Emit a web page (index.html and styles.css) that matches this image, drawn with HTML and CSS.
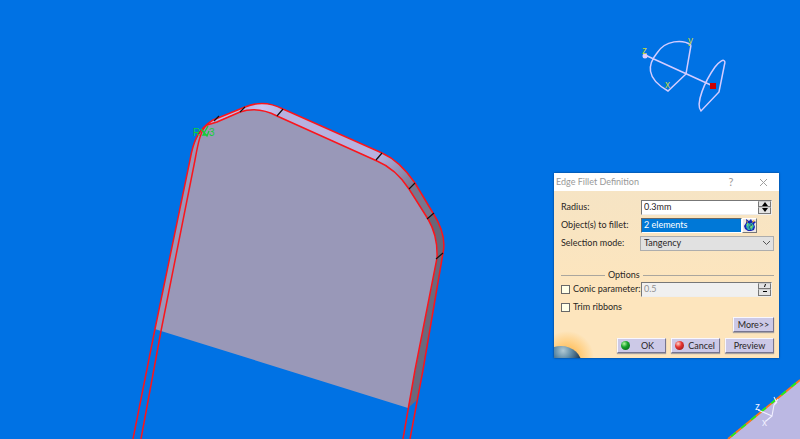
FILE: index.html
```html
<!DOCTYPE html>
<html lang="en">
<head>
<meta charset="utf-8">
<title>Edge Fillet Definition</title>
<link rel="stylesheet" href="styles.css">
</head>
<body>
<main class="viewport">
  <svg class="scene" viewBox="0 0 800 439" preserveAspectRatio="xMidYMid slice" aria-hidden="true">
    <defs>
      <linearGradient id="bend" gradientUnits="userSpaceOnUse" x1="378" y1="152" x2="414" y2="187">
        <stop offset="0" stop-color="#b8b4e4"/><stop offset="1" stop-color="#77768f"/>
      </linearGradient>
      <linearGradient id="crest" gradientUnits="userSpaceOnUse" x1="243" y1="0" x2="281" y2="0">
        <stop offset="0" stop-color="#b4b0e0"/><stop offset=".5" stop-color="#c9c4f2"/><stop offset="1" stop-color="#b8b4e2"/>
      </linearGradient>
    </defs>
    <!-- part: side walls, then front face -->
    <path fill="#9a97b8" d="M155 329L190 160Q194 136 208 123L217 122L200 145L161 331Z"/>
    <path fill="#c3b9e6" d="M207 124L217 118L245 107L240 112L217 122Z"/>
    <path fill="url(#crest)" d="M240 112L245 107Q264 99 283 109L277 116Q258 106 240 112Z"/>
    <path fill="#b7b2df" d="M277 116L283 109L382 153L377 161Z"/>
    <path fill="url(#bend)" d="M377 161L382 153Q400 161 415 183L409 189Q396 169 377 161Z"/>
    <path fill="#77768e" d="M409 189L415 183L433 213L428 219Z"/>
    <path fill="#686779" d="M428 219L433 213Q446 233 443 253L437 258Q437 236 428 219Z"/>
    <path fill="#6b697c" d="M437 258L443 253L417 400L408 408Z"/>
    <path fill="#9998b8" d="M161 331L195 160Q198 134 207 125L240 112Q258 106 277 116L377 161Q396 169 409 189L428 219Q439 239 437 258L408 408Z"/>
    <g fill="none" stroke="#fb151b" stroke-width="1.500">
      <path d="M133 439L155 329L190 160C193 143 197 130 213 120L245 107Q264 99 283 109L382 153Q400 161 415 183L433 213Q447 235 443 253L423 370L410 439"/>
      <path d="M141 439L161 331L195 160C198 143 201 129 207 125L217 122L240 112Q258 106 277 116L377 161Q396 169 409 189L428 219Q438 236 437 258L415 370L403 439"/>
    </g>
    <path fill="none" stroke="#111" stroke-width="1.2" d="M214 121l5-5M240 112l5-5M277 116l6-7M376 160l6-7M409 189l6-6M427 219l7-6M436 259l7-6"/>
    <g class="dimension">
      <text x="193" y="136">R</text><text x="209" y="136">3</text>
      <path d="M201 129l6 7 2-5M208 126l-5 9h5"/>
    </g>
    <!-- orientation compass -->
    <g fill="none" stroke="#d4ccff" stroke-width="1.500">
      <path d="M645 55L713 86M691 45C683 39 665 40 657 53C648 64 645 78 668 91L686 74L691 45M725 62C724 58 719 62 715 67C705 81 695 104 701 111L719 92L725 62"/>
    </g>
    <circle cx="645" cy="56" r="2.5" fill="#e1ceff"/>
    <path fill="#cb0000" d="M710 83h6v6h-6z"/>
    <g class="axes"><text x="642" y="54">z</text><text x="688" y="44">y</text><text x="665" y="88">x</text></g>
    <!-- neighbouring part and axis triad -->
    <path fill="#bbb8e3" d="M800 380L729 439H800Z"/>
    <path stroke="#ff7518" stroke-width="1.8" d="M800 380L728 439"/>
    <path stroke="#16f51b" stroke-width="1.8" stroke-dasharray="6 7" d="M796 383L728 439"/>
    <path fill="none" stroke="#f1f0ff" stroke-width="1.1" d="M758 410L772 416L774 405L778 399M772 416L766 421M774 397l2 4M774 405l3-3"/>
    <g class="triad"><text x="755" y="410">z</text><text x="762" y="426">x</text></g>
  </svg>

  <form class="dialog" aria-labelledby="title">
    <header class="titlebar">
      <h1 id="title">Edge Fillet Definition</h1>
      <button type="button" class="caption" aria-label="Help">?</button>
      <button type="button" class="caption" aria-label="Close"><svg width="9" height="9" viewBox="0 0 9 9"><path d="M1 1l7 7M8 1l-7 7"/></svg></button>
    </header>
    <div class="content">
      <div class="row">
        <label for="radius">Radius:</label>
        <div class="spin">
          <input id="radius" type="text" value="0.3mm">
          <div class="steps">
            <button type="button" aria-label="Increase radius"><svg viewBox="0 0 8 4"><path d="M4 0l3 4H1z"/></svg></button>
            <button type="button" aria-label="Decrease radius"><svg viewBox="0 0 8 4"><path d="M1 0h6L4 4z"/></svg></button>
          </div>
        </div>
      </div>
      <div class="row">
        <label for="objects">Object(s) to fillet:</label>
        <div class="picker">
          <input id="objects" type="text" value="2 elements">
          <button type="button" class="bag" aria-label="Edit elements">
            <svg width="12" height="12" viewBox="0 0 12 12">
              <path fill="#1525b5" d="M2 0l3 2 2-2 1 2h2l2 1-2 2 1 3-1 3-3 1H4L1 10 0 7l2-3z"/>
              <path fill="#32aeb0" d="M3 4h5l2 3-2 4H4L2 8z"/>
              <path fill="#82df68" d="M2 6l2-2v3zM6 7l3-1-2 4z"/>
              <path fill="#f4b629" d="M9 1l2 1-3 2zM2 1l2 2-1 1z"/>
              <path fill="none" stroke="#182566" stroke-width=".6" d="M5 4l3 2-3 2 2 3"/>
            </svg>
          </button>
        </div>
      </div>
      <div class="row">
        <label for="mode">Selection mode:</label>
        <div class="choice">
          <select id="mode"><option>Tangency</option></select>
          <svg class="chevron" width="7" height="4" viewBox="0 0 7 4"><path d="M0 0l3.500 3.500L7 0"/></svg>
        </div>
      </div>
      <fieldset>
        <legend class="divider"><span>Options</span></legend>
        <div class="row conic">
          <label class="tick"><input type="checkbox">Conic parameter:</label>
          <div class="spin disabled">
            <input type="text" value="0.5" aria-label="Conic parameter value" disabled>
            <div class="steps">
              <button type="button" aria-label="Increase parameter" disabled><svg viewBox="0 0 8 4"><path d="M4 0h1L4 3H3z"/></svg></button>
              <button type="button" aria-label="Decrease parameter" disabled><svg viewBox="0 0 8 4"><path d="M2 1h4v1H2z"/></svg></button>
            </div>
          </div>
        </div>
        <label class="tick"><input type="checkbox">Trim ribbons</label>
      </fieldset>
      <div class="more"><button type="button" class="push">More&gt;&gt;</button></div>
      <div class="actions">
        <button type="submit" class="push"><i class="lamp green"></i><span>OK</span></button>
        <button type="button" class="push"><i class="lamp red"></i><span>Cancel</span></button>
        <button type="button" class="push">Preview</button>
      </div>
    </div>
  </form>
</main>
</body>
</html>
```
FILE: styles.css
```css
* { box-sizing: border-box; }
body { margin: 0; background: #0072e4; color: #29251f; font: 9px/12px Lato, "Open Sans", sans-serif; }
button, input, select { font: inherit; color: inherit; margin: 0; padding: 0; border-radius: 0; }
.viewport { position: relative; min-height: 100vh; overflow: hidden; }
.scene { position: absolute; inset: 0; width: 100%; height: 100%; }
.scene text { font-family: "Liberation Sans", sans-serif; font-size: 10px; }
.dimension { fill: #13cf36; }
.dimension path { fill: none; stroke: #13cf36; stroke-width: 1.3; }
.axes { fill: #c5d83b; }
.triad { fill: #f1f0ff; }

.dialog { position: absolute; top: 173px; right: 21px; width: 225px; background: #fde5bd; box-shadow: 0 0 2px #07366d; }
.titlebar { display: flex; align-items: center; height: 18px; padding-left: 2px; background: #fff; color: #999; }
h1 { flex: 1; margin: 0; font: inherit; }
.caption { width: 32px; height: 18px; border: 0; background: none; font-size: 11px; display: grid; place-items: center; }
.caption svg { fill: none; stroke: #a0a0a0; }
.content { position: relative; overflow: hidden; padding: 8px 5px 5px 7px; background: radial-gradient(circle at 13px 100%, #ffad32 0, #ffd28a 17px, #fde5bd00 27px), linear-gradient(#f6e4c4, #fde5bd 60%); }
.content::after { content: ""; position: absolute; left: -14px; bottom: -26px; width: 42px; height: 38px; border-radius: 50%; background: radial-gradient(circle at 55% 12%, #b0c9d4 0, #648fa9 20%, #29455f 42%, #16222e 65%); }
.row { display: grid; grid-template-columns: 80px 1fr; align-items: center; min-height: 16px; margin-bottom: 2px; }
.row > * { min-width: 0; }
label { white-space: nowrap; }
.spin, .picker { display: flex; height: 15px; margin-right: 2px; }
.spin { border: 1px solid; border-color: #777 #eee #eee #777; background: #fff; }
.spin input { flex: 1; min-width: 0; border: 0; padding-left: 2px; background: none; }
.steps { display: grid; grid-template-rows: 1fr 1fr; width: 13px; background: #777; }
.steps button { display: grid; place-items: center; min-height: 0; border: 1px solid #777; border-top-color: #ccc; background: #e3e3e3; }
.steps svg { width: 8px; height: 4px; }
.disabled { background: #f0f0f0; color: #909090; }
.picker input { width: 101px; border: 1px solid; border-color: #686868 #fff #fff #686868; padding-left: 2px; color: #fff; background: #0078d7; }
.bag { display: grid; place-items: center; width: 15px; height: 15px; border: 1px solid; border-color: #fff #777 #777 #fff; background: #eee9e7; }
.choice { display: grid; align-items: center; margin-left: -1px; }
.choice > * { grid-area: 1 / 1; }
.choice select { appearance: none; width: 100%; height: 15px; padding-left: 3px; border: 1px solid #adadad; background: #e1e1e1; }
.chevron { justify-self: end; margin-right: 4px; fill: none; stroke: #555; pointer-events: none; }
fieldset { min-width: 0; margin: 18px 0 0; padding: 0; border: 0; }
.divider { display: flex; align-items: center; gap: 3px; width: 100%; padding: 0; }
.divider::before { content: ""; width: 44px; border-top: 1px solid #aaa69e; }
.divider::after { content: ""; flex: 1; border-top: 1px solid #aaa69e; }
.conic { margin-bottom: 4px; }
.tick { display: flex; align-items: center; gap: 3px; }
.tick input { appearance: none; flex: none; width: 9px; height: 9px; border: 1px solid #686868; background: #ffffe8; }
.more { display: flex; justify-content: flex-end; margin-top: 4px; }
.actions { display: flex; justify-content: flex-end; gap: 5px; margin-top: 6px; }
.push { display: flex; align-items: center; justify-content: center; width: 49px; height: 15px; border: 1px solid; border-color: #f8f7ff #77758f #77758f #f8f7ff; background: #ccc9e7; box-shadow: 0 1px 1px #a6a1a0; }
.more .push { width: 41px; }
.push span { flex: 1; text-align: center; }
.lamp { width: 9px; height: 9px; margin-left: 3px; border-radius: 50%; }
.green { background: radial-gradient(circle at 35% 30%, #b2f7a0, #16a32a 40%, #045511); }
.red { background: radial-gradient(circle at 35% 30%, #ffd5cc, #e73430 40%, #811111); }
```
